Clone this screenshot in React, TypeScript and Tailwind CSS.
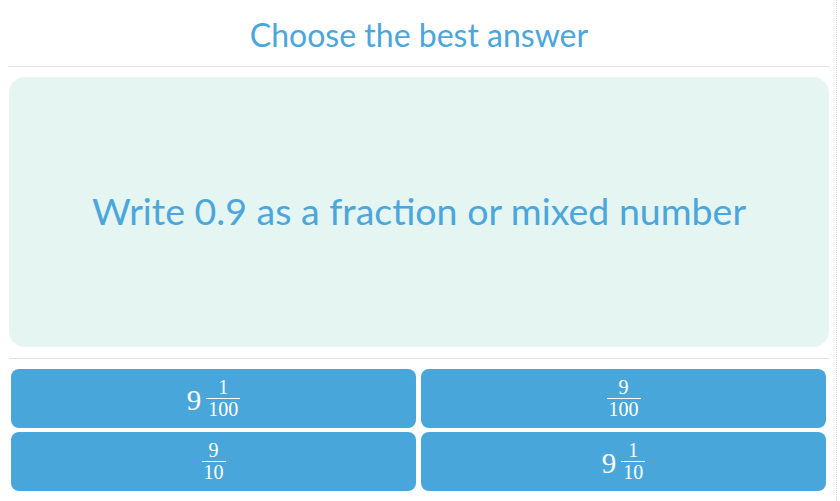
import React from "react";

function Frac({ whole, num, den }: { whole?: string; num: string; den: string }) {
  return (
    <span className="flex items-center gap-[5px] text-white" style={{ fontFamily: '"Liberation Serif", serif' }}>
      {whole && <span className="text-[29px] leading-none pt-[3px]">{whole}</span>}
      <span className="flex flex-col items-center text-[20px] leading-[19px]">
        <span className="px-[2px]">{num}</span>
        <span className="h-px w-full bg-white my-[1px]" />
        <span className="px-[2px]">{den}</span>
      </span>
    </span>
  );
}

export default function App() {
  const answers = [
    { whole: "9", num: "1", den: "100" },
    { num: "9", den: "100" },
    { num: "9", den: "10" },
    { whole: "9", num: "1", den: "10" },
  ];
  return (
    <div className="w-[840px] h-[501px] bg-white relative" style={{ fontFamily: 'Lato, "Open Sans", sans-serif' }}>
      <div className="absolute right-[3px] top-0 h-full border-r border-dotted border-[#d8d8d8]" />
      <div className="px-[8px] pr-[10px]">
        <div className="h-[67px] flex items-center justify-center border-b border-[#e2e2e2]">
          <h1 className="text-[32px] text-[#4aa6db] pt-[3px]">Choose the best answer</h1>
        </div>
        <div className="mt-[10px] mx-[1px] h-[270px] rounded-[16px] bg-[#e5f5f2] flex items-center justify-center">
          <p className="text-[37.5px] text-[#4aa6db] pb-[2px]">Write 0.9 as a fraction or mixed number</p>
        </div>
        <div className="mt-[11px] mx-[1px] border-t border-[#e2e2e2]" />
        <div className="mt-[10px] pl-[3px] pr-[4px] grid grid-cols-2 gap-x-[5px] gap-y-[4px]">
          {answers.map((a, i) => (
            <button key={i} className="h-[59px] rounded-[8px] bg-[#49a6da] flex items-center justify-center">
              <Frac whole={a.whole} num={a.num} den={a.den} />
            </button>
          ))}
        </div>
      </div>
    </div>
  );
}
